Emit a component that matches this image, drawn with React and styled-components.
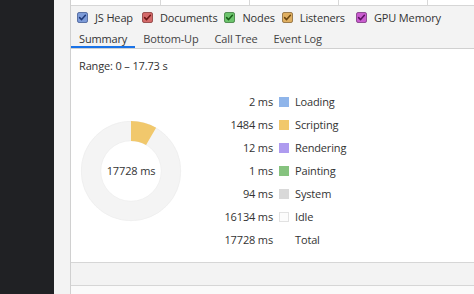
import React from "react";
import styled, { createGlobalStyle } from "styled-components";

const Global = createGlobalStyle`
  html, body { margin: 0; padding: 0; }
  body {
    width: 474px; height: 294px; overflow: hidden;
    font-family: "Open Sans", "Noto Sans", sans-serif;
    font-size: 11px; letter-spacing: -0.15px; color: #333;
  }
`;

const Page = styled.div`
  display: flex;
  width: 474px;
  height: 294px;
`;

const DarkStrip = styled.div`
  width: 54px;
  background: #202124;
  flex: none;
`;

const Gutter = styled.div`
  width: 16px;
  background: #f3f3f3;
  border-right: 1px solid #d0d0d0;
  flex: none;
`;

const Main = styled.div`
  flex: 1;
  display: flex;
  flex-direction: column;
  min-width: 0;
`;

const Ruler = styled.div`
  height: 5px;
  background: #fff;
  border-bottom: 1px solid #d6d6d6;
  background-image: repeating-linear-gradient(to right, transparent 0 88px, #d8d8d8 88px 89px);
  background-position: 1px 0;
`;

const CheckRow = styled.div`
  height: 22px;
  background: #f3f3f3;
  display: flex;
  align-items: center;
  padding-left: 6px;
`;

const CheckItem = styled.label`
  display: flex;
  align-items: center;
  gap: 7px;
  margin-right: ${(p) => p.$mr}px;
  white-space: nowrap;
`;

const TabRow = styled.div`
  height: 20px;
  background: #f3f3f3;
  border-bottom: 1px solid #d0d0d0;
  display: flex;
  align-items: stretch;
`;

const Tab = styled.div`
  padding: 0 8px;
  display: flex;
  align-items: center;
  white-space: nowrap;
  box-shadow: ${(p) => (p.$active ? "inset 0 -2px 0 #1a73e8" : "none")};
  color: ${(p) => (p.$active ? "#333" : "#444")};
`;

const Content = styled.div`
  flex: 1;
  background: #fff;
  padding: 9px 8px 0;
  display: flex;
  flex-direction: column;
`;

const Range = styled.div`
  line-height: 16px;
`;

const Body = styled.div`
  display: flex;
  align-items: center;
  margin-top: 16px;
`;

const DonutWrap = styled.div`
  position: relative;
  width: 102px;
  height: 102px;
  flex: none;
  margin-left: 1px;
`;

const DonutLabel = styled.div`
  position: absolute;
  inset: 0;
  display: flex;
  align-items: center;
  justify-content: center;
`;

const Legend = styled.div`
  display: grid;
  grid-template-columns: 80px 10px auto;
  column-gap: 6px;
  grid-auto-rows: 23px;
  align-items: center;
  margin-left: 11px;
`;

const Value = styled.div`
  text-align: right;
  white-space: nowrap;
`;

const Swatch = styled.div`
  width: 10px;
  height: 10px;
  box-sizing: border-box;
  background: ${(p) => p.$c};
  border: ${(p) => (p.$border ? "1px solid #e2e2e2" : "none")};
`;

const BottomBar = styled.div`
  height: 22px;
  background: #f3f3f3;
  border-top: 1px solid #d6d6d6;
  border-bottom: 1px solid #d6d6d6;
`;

const BottomPad = styled.div`
  height: 8px;
  background: #fafafa;
`;

function Check({ fill, stroke }) {
  return (
    <svg width="11" height="11" viewBox="0 0 11 11">
      <rect x="0.5" y="0.5" width="10" height="10" rx="1.5" fill={fill} stroke={stroke} strokeWidth="0.6" />
      <path d="M2.6 5.6 L4.6 7.6 L8.4 3.2" fill="none" stroke={stroke} strokeWidth="1.5" strokeLinecap="round" strokeLinejoin="round" />
    </svg>
  );
}

function Donut() {
  const cx = 51, cy = 51, R = 50, r = 30;
  const a = (1484 / 17728) * 2 * Math.PI;
  const pt = (rad, ang) => [cx + rad * Math.sin(ang), cy - rad * Math.cos(ang)];
  const [x1, y1] = pt(R, 0);
  const [x2, y2] = pt(R, a);
  const [x3, y3] = pt(r, a);
  const [x4, y4] = pt(r, 0);
  const d = `M${x1} ${y1} A${R} ${R} 0 0 1 ${x2} ${y2} L${x3} ${y3} A${r} ${r} 0 0 0 ${x4} ${y4} Z`;
  return (
    <svg width="102" height="102" viewBox="0 0 102 102">
      <circle cx={cx} cy={cy} r={(R + r) / 2} fill="none" stroke="#f4f4f4" strokeWidth={R - r} />
      <circle cx={cx} cy={cy} r={R - 0.3} fill="none" stroke="#ececec" strokeWidth="0.6" />
      <circle cx={cx} cy={cy} r={r + 0.3} fill="none" stroke="#ececec" strokeWidth="0.6" />
      <path d={d} fill="#f1c86c" />
    </svg>
  );
}

const checks = [
  { label: "JS Heap", fill: "#7d9bd8", stroke: "#1f3a7a", mr: 9 },
  { label: "Documents", fill: "#d46a6a", stroke: "#6b1515", mr: 7 },
  { label: "Nodes", fill: "#6cc46c", stroke: "#175c17", mr: 7 },
  { label: "Listeners", fill: "#e0b062", stroke: "#6a4510", mr: 11 },
  { label: "GPU Memory", fill: "#c95ccf", stroke: "#5a1060", mr: 0 },
];

const rows = [
  { v: "2 ms", c: "#8fb5ea", l: "Loading" },
  { v: "1484 ms", c: "#f1c86c", l: "Scripting" },
  { v: "12 ms", c: "#ae9bef", l: "Rendering" },
  { v: "1 ms", c: "#86c37f", l: "Painting" },
  { v: "94 ms", c: "#d9d9d9", l: "System" },
  { v: "16134 ms", c: "#fcfcfc", l: "Idle", border: true },
  { v: "17728 ms", c: null, l: "Total" },
];

export default function App() {
  return (
    <>
      <Global />
      <Page>
        <DarkStrip />
        <Gutter />
        <Main>
          <Ruler />
          <CheckRow>
            {checks.map((c) => (
              <CheckItem key={c.label} $mr={c.mr}>
                <Check fill={c.fill} stroke={c.stroke} />
                {c.label}
              </CheckItem>
            ))}
          </CheckRow>
          <TabRow>
            <Tab $active>Summary</Tab>
            <Tab>Bottom-Up</Tab>
            <Tab>Call Tree</Tab>
            <Tab>Event Log</Tab>
          </TabRow>
          <Content>
            <Range>Range: 0 – 17.73 s</Range>
            <Body>
              <DonutWrap>
                <Donut />
                <DonutLabel>17728 ms</DonutLabel>
              </DonutWrap>
              <Legend>
                {rows.map((r) => (
                  <React.Fragment key={r.l}>
                    <Value>{r.v}</Value>
                    {r.c ? <Swatch $c={r.c} $border={r.border} /> : <span />}
                    <span>{r.l}</span>
                  </React.Fragment>
                ))}
              </Legend>
            </Body>
          </Content>
          <BottomBar />
          <BottomPad />
        </Main>
      </Page>
    </>
  );
}
